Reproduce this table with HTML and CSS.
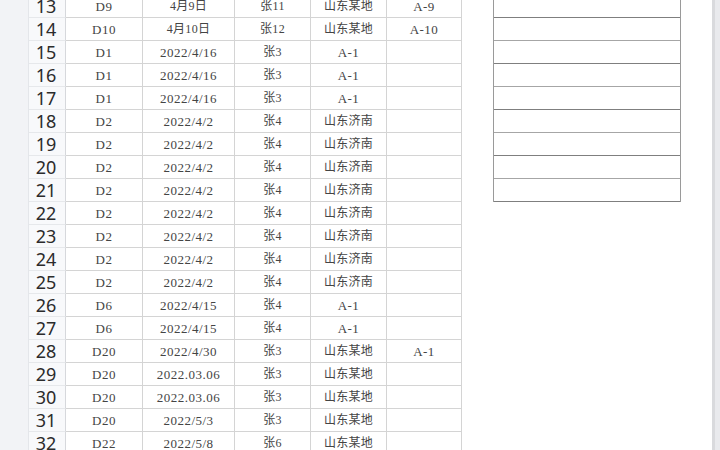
FILE: index.html
```html
<!DOCTYPE html>
<html lang="zh">
<head>
<meta charset="utf-8">
<link rel="stylesheet" href="styles.css">
</head>
<body>
<div class="screen">
  <div class="gutter"></div>
  <div class="sheet">
    <div class="row"><div class="hd">13</div><div class="c">D9</div><div class="c z">4月9日</div><div class="c z">张11</div><div class="c z">山东某地</div><div class="c">A-9</div></div>
    <div class="row"><div class="hd">14</div><div class="c">D10</div><div class="c z">4月10日</div><div class="c z">张12</div><div class="c z">山东某地</div><div class="c">A-10</div></div>
    <div class="row"><div class="hd">15</div><div class="c">D1</div><div class="c">2022/4/16</div><div class="c z">张3</div><div class="c">A-1</div><div class="c"></div></div>
    <div class="row"><div class="hd">16</div><div class="c">D1</div><div class="c">2022/4/16</div><div class="c z">张3</div><div class="c">A-1</div><div class="c"></div></div>
    <div class="row"><div class="hd">17</div><div class="c">D1</div><div class="c">2022/4/16</div><div class="c z">张3</div><div class="c">A-1</div><div class="c"></div></div>
    <div class="row"><div class="hd">18</div><div class="c">D2</div><div class="c">2022/4/2</div><div class="c z">张4</div><div class="c z">山东济南</div><div class="c"></div></div>
    <div class="row"><div class="hd">19</div><div class="c">D2</div><div class="c">2022/4/2</div><div class="c z">张4</div><div class="c z">山东济南</div><div class="c"></div></div>
    <div class="row"><div class="hd">20</div><div class="c">D2</div><div class="c">2022/4/2</div><div class="c z">张4</div><div class="c z">山东济南</div><div class="c"></div></div>
    <div class="row"><div class="hd">21</div><div class="c">D2</div><div class="c">2022/4/2</div><div class="c z">张4</div><div class="c z">山东济南</div><div class="c"></div></div>
    <div class="row"><div class="hd">22</div><div class="c">D2</div><div class="c">2022/4/2</div><div class="c z">张4</div><div class="c z">山东济南</div><div class="c"></div></div>
    <div class="row"><div class="hd">23</div><div class="c">D2</div><div class="c">2022/4/2</div><div class="c z">张4</div><div class="c z">山东济南</div><div class="c"></div></div>
    <div class="row"><div class="hd">24</div><div class="c">D2</div><div class="c">2022/4/2</div><div class="c z">张4</div><div class="c z">山东济南</div><div class="c"></div></div>
    <div class="row"><div class="hd">25</div><div class="c">D2</div><div class="c">2022/4/2</div><div class="c z">张4</div><div class="c z">山东济南</div><div class="c"></div></div>
    <div class="row"><div class="hd">26</div><div class="c">D6</div><div class="c">2022/4/15</div><div class="c z">张4</div><div class="c">A-1</div><div class="c"></div></div>
    <div class="row"><div class="hd">27</div><div class="c">D6</div><div class="c">2022/4/15</div><div class="c z">张4</div><div class="c">A-1</div><div class="c"></div></div>
    <div class="row"><div class="hd">28</div><div class="c">D20</div><div class="c">2022/4/30</div><div class="c z">张3</div><div class="c z">山东某地</div><div class="c">A-1</div></div>
    <div class="row"><div class="hd">29</div><div class="c">D20</div><div class="c">2022.03.06</div><div class="c z">张3</div><div class="c z">山东某地</div><div class="c"></div></div>
    <div class="row"><div class="hd">30</div><div class="c">D20</div><div class="c">2022.03.06</div><div class="c z">张3</div><div class="c z">山东某地</div><div class="c"></div></div>
    <div class="row"><div class="hd">31</div><div class="c">D20</div><div class="c">2022/5/3</div><div class="c z">张3</div><div class="c z">山东某地</div><div class="c"></div></div>
    <div class="row"><div class="hd">32</div><div class="c">D22</div><div class="c">2022/5/8</div><div class="c z">张6</div><div class="c z">山东某地</div><div class="c"></div></div>
  </div>
  <div class="box">
    <div class="brow"></div>
    <div class="brow lite"></div>
    <div class="brow"></div>
    <div class="brow lite"></div>
    <div class="brow"></div>
    <div class="brow lite"></div>
    <div class="brow"></div>
    <div class="brow lite"></div>
    <div class="brow"></div>
  </div>
  <div class="fill"></div>
  <div class="scroll"><div class="track"></div></div>
</div>
</body>
</html>
```

FILE: styles.css
```css
html, body {
  margin: 0;
  padding: 0;
  background: #ffffff;
  overflow: hidden;
}
.screen {
  display: flex;
  align-items: flex-start;
  width: 720px;
  height: 450px;
  overflow: hidden;
  background: #ffffff;
}
.gutter {
  width: 29px;
  height: 450px;
  flex: none;
  background: #f2f3f6;
  border-right: 1px solid #e4e6ea;
  box-sizing: border-box;
}
.sheet {
  flex: none;
  display: flex;
  flex-direction: column;
  margin-top: -5px;
}
.row {
  flex: none;
  display: grid;
  grid-template-columns: 37px 77px 92px 76px 76px 75px;
  height: 23px;
}
.hd {
  box-sizing: border-box;
  background: #f8f9fb;
  border-right: 1px solid #d6d8dc;
  border-bottom: 1px solid #e6e8eb;
  font-family: "Noto Sans", "Liberation Sans", sans-serif;
  font-size: 18px;
  color: #2b2b2b;
  display: flex;
  align-items: center;
  justify-content: center;
  line-height: 1;
  padding-right: 2px;
}
.c {
  box-sizing: border-box;
  border-right: 1px solid #d4d4d4;
  border-bottom: 1px solid #d4d4d4;
  font-family: "Liberation Serif", "Noto Sans CJK SC", serif;
  font-size: 13px;
  letter-spacing: 0.5px;
  color: #444444;
  display: flex;
  align-items: center;
  justify-content: center;
  line-height: 1;
  white-space: nowrap;
}
.c.z {
  font-size: 12px;
  letter-spacing: 0.3px;
}
.box {
  flex: none;
  width: 188px;
  margin-left: 31px;
  margin-top: -5px;
  border-left: 1px solid #9a9a9a;
  border-right: 1px solid #9a9a9a;
  box-sizing: border-box;
}
.brow {
  height: 23px;
  box-sizing: border-box;
  border-bottom: 1px solid #7f7f7f;
}
.brow.lite {
  border-bottom-color: #a6a6a6;
}
.fill {
  flex: 1;
}
.scroll {
  flex: none;
  width: 8px;
  height: 450px;
  background: #e9eaed;
  display: flex;
}
.track {
  width: 3px;
  background: #d9dadd;
}
```
